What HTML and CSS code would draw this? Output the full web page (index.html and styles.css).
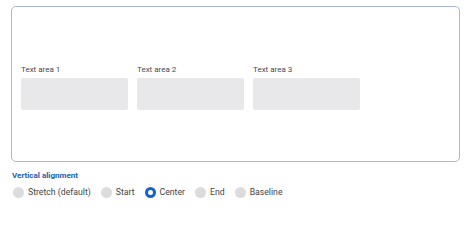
FILE: index.html
```html
<!DOCTYPE html>
<html>
<head>
<meta charset="utf-8">
<link rel="stylesheet" href="styles.css">
</head>
<body>
<div class="demo">
  <div class="field">
    <div class="label">Text area 1</div>
    <div class="area"></div>
  </div>
  <div class="field">
    <div class="label">Text area 2</div>
    <div class="area"></div>
  </div>
  <div class="field">
    <div class="label">Text area 3</div>
    <div class="area"></div>
  </div>
</div>
<div class="group">
  <div class="legend">Vertical alignment</div>
  <div class="options">
    <label class="opt"><span class="dot"></span>Stretch (default)</label>
    <label class="opt"><span class="dot"></span>Start</label>
    <label class="opt"><span class="dot on"></span>Center</label>
    <label class="opt"><span class="dot"></span>End</label>
    <label class="opt"><span class="dot"></span>Baseline</label>
  </div>
</div>
</body>
</html>
```
FILE: styles.css
```css
html, body {
  margin: 0;
  background: #ffffff;
}
body {
  padding: 6px 14px 0 11px;
  font-family: Roboto, "Noto Sans", sans-serif;
}
.demo {
  box-sizing: border-box;
  width: 449px;
  height: 156px;
  border: 1px solid #a9b7cf;
  border-radius: 5px;
  display: flex;
  align-items: center;
  gap: 9px;
  padding: 6px 0 0 9px;
}
.field {
  display: flex;
  flex-direction: column;
}
.label {
  font-size: 8px;
  line-height: 12px;
  color: #4a4a4a;
  margin-bottom: 2px;
}
.area {
  width: 107px;
  height: 32px;
  background: #e8e8eb;
  border-radius: 2px;
}
.group {
  padding: 7px 0 0 1px;
}
.legend {
  font-size: 8px;
  font-weight: 700;
  color: #1b5db0;
  line-height: 13px;
}
.options {
  display: flex;
  align-items: center;
  gap: 10px;
  margin-top: 3px;
  padding-left: 1px;
}
.opt {
  display: flex;
  align-items: center;
  gap: 4px;
  font-size: 8.7px;
  color: #444;
  line-height: 14px;
}
.dot {
  box-sizing: border-box;
  width: 11px;
  height: 11px;
  border-radius: 50%;
  background: #dcdcdf;
}
.dot.on {
  background: #ffffff;
  border: 3px solid #1463cc;
}
```
